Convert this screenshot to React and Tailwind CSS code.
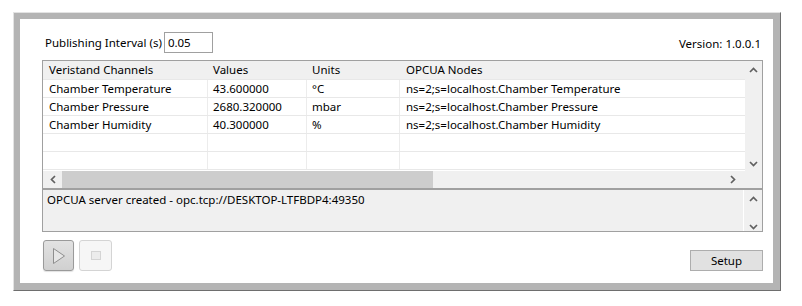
import React from "react";

const Chev = ({ dir }) => {
  const pts = {
    up: "1,5 4.5,1.5 8,5",
    down: "1,1 4.5,4.5 8,1",
    left: "5,1 1.5,4.5 5,8",
    right: "1,1 4.5,4.5 1,8",
  }[dir];
  const vertical = dir === "up" || dir === "down";
  return (
    <svg width={vertical ? 9 : 6} height={vertical ? 6 : 9} viewBox={vertical ? "0 0 9 6" : "0 0 6 9"}>
      <polyline points={pts} fill="none" stroke="#606060" strokeWidth="1.7" />
    </svg>
  );
};

const rows = [
  ["Chamber Temperature", "43.600000", "°C", "ns=2;s=localhost.Chamber Temperature"],
  ["Chamber Pressure", "2680.320000", "mbar", "ns=2;s=localhost.Chamber Pressure"],
  ["Chamber Humidity", "40.300000", "%", "ns=2;s=localhost.Chamber Humidity"],
  ["", "", "", ""],
  ["", "", "", ""],
];

const cols = "grid grid-cols-[165px_99px_93px_345px]";

export default function App() {
  return (
    <div
      className="w-[802px] h-[306px] bg-white pt-[12px] pl-[13px] text-[11.5px] text-black"
      style={{ fontFamily: '"Noto Sans", "Liberation Sans", sans-serif' }}
    >
      <div className="w-[768px] h-[279px] bg-[#b4b4b4] border-t border-l border-t-[#e3e3e3] border-l-[#e3e3e3] border-r border-b border-r-[#6e6e6e] border-b-[#6e6e6e] pt-[6px] pl-[6px]">
        <div className="w-[753px] h-[264px] bg-white pl-[22px] pr-[10px] pt-[13px] flex flex-col">
          {/* top row */}
          <div className="flex items-center h-[21px]">
            <span className="ml-[3px] leading-[16px]">Publishing Interval (s)</span>
            <div className="ml-[2px] w-[49px] h-[21px] border border-[#a0a0a0] pl-[3px] leading-[19px]">0.05</div>
            <span className="ml-auto mr-[2px] leading-[16px] mt-[2px]">Version: 1.0.0.1</span>
          </div>

          {/* table */}
          <div className="mt-[7px] w-[721px] border border-[#a0a0a0] flex">
            <div className="w-[702px] flex flex-col">
              <div className={`${cols} h-[18px] bg-[#f0f0f0] leading-[18px]`}>
                <div className="pl-[6px]">Veristand Channels</div>
                <div className="pl-[5px]">Values</div>
                <div className="pl-[5px]">Units</div>
                <div className="pl-[6px]">OPCUA Nodes</div>
              </div>
              {rows.map((r, i) => (
                <div
                  key={i}
                  className={`${cols} h-[18px] border-t border-[#e8e8e8] leading-[17px] ${i === rows.length - 1 ? "border-b h-[19px]" : ""}`}
                >
                  <div className="pl-[6px] border-r border-[#ececec] whitespace-nowrap">{r[0]}</div>
                  <div className="pl-[5px] border-r border-[#ececec] whitespace-nowrap">{r[1]}</div>
                  <div className="pl-[5px] border-r border-[#ececec] whitespace-nowrap">{r[2]}</div>
                  <div className="pl-[6px] whitespace-nowrap">{r[3]}</div>
                </div>
              ))}
              {/* horizontal scrollbar */}
              <div className="mt-[1px] h-[17px] bg-[#f0f0f0] flex items-center">
                <div className="w-[19px] flex justify-center">
                  <Chev dir="left" />
                </div>
                <div className="w-[371px] h-[17px] bg-[#cdcdcd]" />
                <div className="ml-auto w-[17px] flex justify-center mr-[4px]">
                  <Chev dir="right" />
                </div>
              </div>
            </div>
            {/* vertical scrollbar */}
            <div className="w-[17px] bg-[#f0f0f0] flex flex-col items-center pt-[6px]">
              <Chev dir="up" />
              <div className="mt-[88px]">
                <Chev dir="down" />
              </div>
            </div>
          </div>

          {/* log */}
          <div className="w-[721px] h-[43px] bg-[#f0f0f0] border-t border-b border-l border-r border-[#a0a0a0] border-t-[#a0a0a0] flex">
            <div className="w-[701px] pl-[4px] pt-[2px] leading-[16px] border-r border-white">
              OPCUA server created - opc.tcp://DESKTOP-LTFBDP4:49350
            </div>
            <div className="flex-1 flex flex-col items-center pt-[6px]">
              <Chev dir="up" />
              <div className="mt-[22px]">
                <Chev dir="down" />
              </div>
            </div>
          </div>

          {/* buttons */}
          <div className="mt-[8px] flex items-end w-[721px]">
            <div className="ml-[1px] w-[31px] h-[31px] rounded-[3px] border border-[#9a9a9a] bg-gradient-to-b from-[#e2e2e2] to-[#d0d0d0] flex items-center justify-center shadow-[0_1px_1px_rgba(0,0,0,0.12)]">
              <svg width="14" height="18" viewBox="0 0 14 18">
                <polygon points="1.5,1.5 12.5,9 1.5,16.5" fill="#e6e6e6" stroke="#8e8e8e" strokeWidth="1" />
              </svg>
            </div>
            <div className="ml-[5px] w-[33px] h-[31px] rounded-[3px] border border-[#d4d4d4] bg-[#f6f6f6] flex items-center justify-center">
              <div className="w-[10px] h-[9px] border border-[#d4d4d4] bg-[#ececec]" />
            </div>
            <div className="ml-auto w-[73px] h-[21px] border border-[#adadad] bg-[#e1e1e1] flex items-center justify-center leading-[16px]">
              Setup
            </div>
          </div>
        </div>
      </div>
    </div>
  );
}
